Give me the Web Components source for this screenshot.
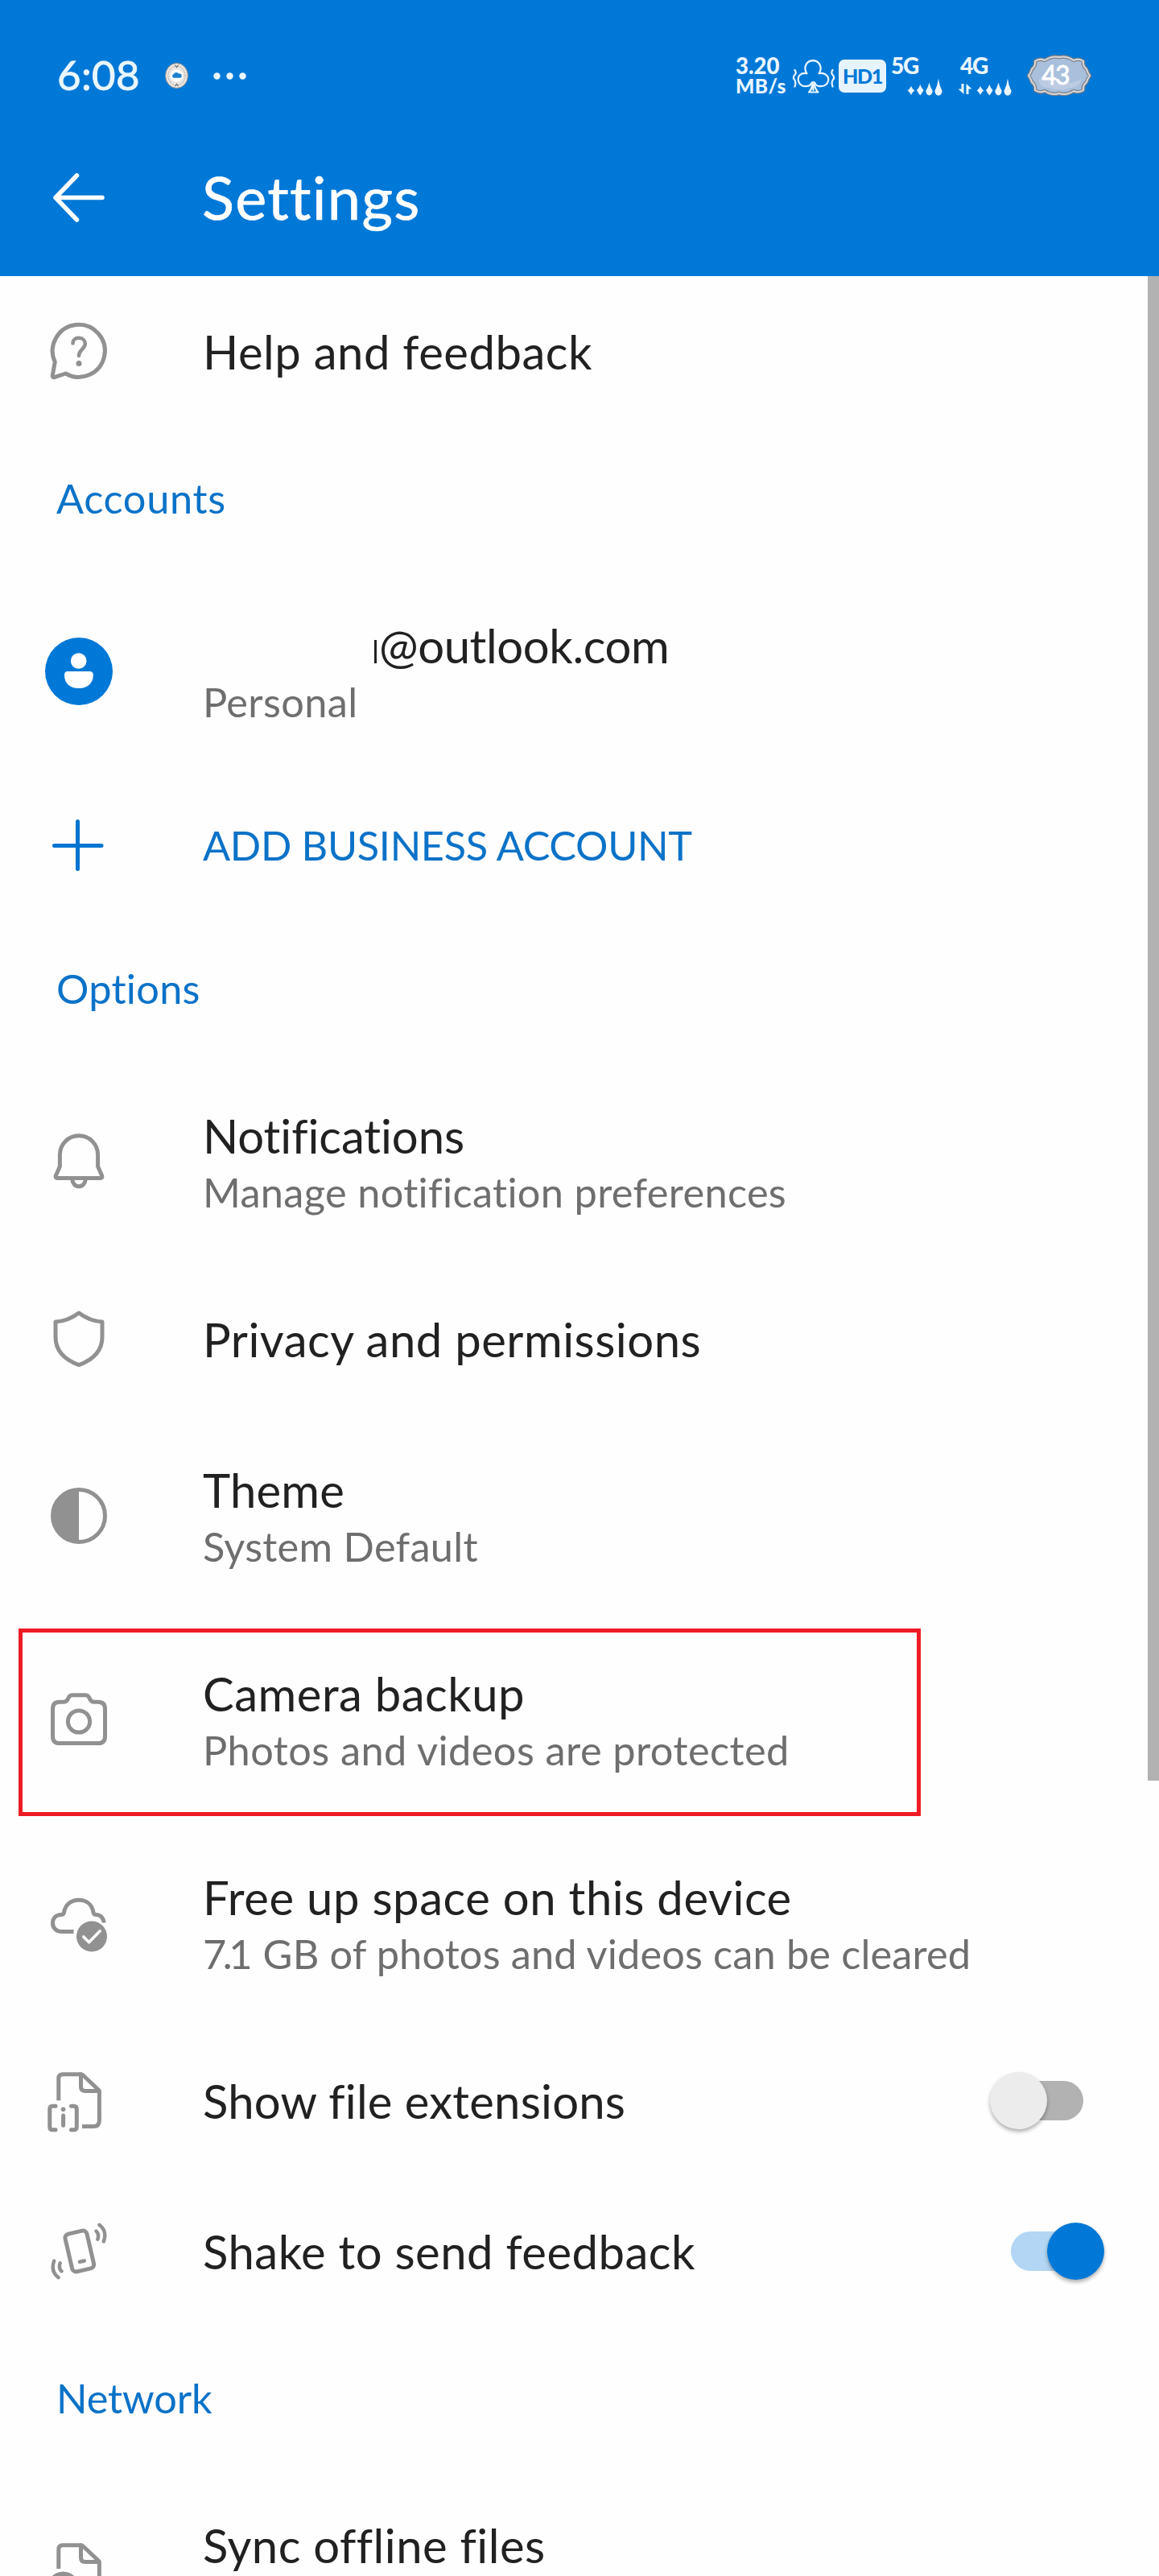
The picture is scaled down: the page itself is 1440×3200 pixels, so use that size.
<!DOCTYPE html>
<html lang="en">
<head>
<meta charset="utf-8">
<title>Settings</title>
<style>
  html, body { margin: 0; padding: 0; }
  body {
    width: 1440px;
    height: 3200px;
    overflow: hidden;
    background: #fefefe;
    color: #212121;
    font-family: Lato, "Open Sans", sans-serif;
    font-variant-ligatures: none;
  }
  .tight { letter-spacing: -0.09em; }
</style>
</head>
<body>
<settings-screen>
  <status-bar slot="header" time="6:08" battery="43"></status-bar>
  <app-bar slot="header">Settings</app-bar>

  <settings-row icon="help" spacing="0.009em">Help and feedback</settings-row>

  <section-label spacing="0.0135em">Accounts</section-label>
  <settings-row icon="person" spacing="-0.0066em" sub-spacing="0.007em">
    <masked-name>@outlook.com</masked-name>
    <span slot="sub">Personal</span>
  </settings-row>
  <settings-row icon="plus" kind="action" spacing="-0.0065em">ADD BUSINESS ACCOUNT</settings-row>

  <section-label spacing="0.0055em">Options</section-label>
  <settings-row icon="bell" spacing="-0.0012em" sub-spacing="0.0063em">
    Notifications
    <span slot="sub">Manage notification preferences</span>
  </settings-row>
  <settings-row icon="shield" spacing="0.0089em">Privacy and permissions</settings-row>
  <settings-row icon="theme" spacing="0.003em" sub-spacing="0.0055em">
    Theme
    <span slot="sub">System Default</span>
  </settings-row>
  <settings-row icon="camera" marked spacing="0.0086em" sub-spacing="0.0086em">
    Camera backup
    <span slot="sub">Photos and videos are protected</span>
  </settings-row>
  <settings-row icon="cloud" spacing="0.0095em" sub-spacing="0.0027em">
    Free up space on this device
    <span slot="sub"><span class="tight">7.</span>1 GB of photos and videos can be cleared</span>
  </settings-row>
  <settings-row icon="extensions" spacing="0.004em">
    Show file extensions
    <toggle-switch slot="control"></toggle-switch>
  </settings-row>
  <settings-row icon="shake" spacing="0.0088em">
    Shake to send feedback
    <toggle-switch slot="control" checked></toggle-switch>
  </settings-row>

  <section-label spacing="-0.0023em">Network</section-label>
  <settings-row icon="sync" spacing="0.0085em">
    Sync offline files
    <span slot="sub">&nbsp;</span>
  </settings-row>
</settings-screen>

<script>
// All row icons share an 84x84 box
const FILE_TOP = '<path d="M44.5 9.8 H22 Q16.8 9.8 16.8 15 V';
const FILE_FOLD = '<path d="M44.5 9.8 V25 Q44.5 30.5 50 30.5 H67.3"/>';
const ICONS = {
  help: `
    <path d="M25.5 70 A32.5 32.5 0 1 0 12.3 55.5 L9.2 72.6 Q9.2 75 11.6 74.7 Z"/>
    <path stroke-width="4.6" d="M34.5 32.5 C34.5 28.5 37.5 25.8 42 25.8 S49.8 28.8 49.8 33 C49.8 39.5 42 40.5 42 48"/>
    <circle cx="42" cy="57.6" r="3.5" fill="currentColor" stroke="none"/>`,
  person: `
    <circle cx="42" cy="42" r="42" fill="#0078d7" stroke="none"/>
    <circle cx="41.7" cy="29" r="9.8" fill="#fff" stroke="none"/>
    <path d="M28 42 H55.4 Q59.8 42 59.8 46.5 C59.8 57 52.5 63 41.7 63 S24 57 24 46.5 Q24 42 28 42 Z" fill="#fff" stroke="none"/>`,
  plus: `<path d="M40.5 13.5 V72.5 M11.5 43.5 H70"/>`,
  bell: `
    <path d="M42 9.8 A23.6 23.6 0 0 0 18.4 33.4 V48 L13.2 59.8 Q12.6 62.4 15 62.4 H69 Q71.4 62.4 70.8 59.8 L65.6 48 V33.4 A23.6 23.6 0 0 0 42 9.8 Z"/>
    <path d="M33.8 64 a8.2 8.8 0 0 0 16.4 0"/>`,
  shield: `<path d="M42 10 Q56 20.3 71 21 V40 C71 57 60 68 42 74.6 C24 68 13 57 13 40 V21 Q28 20.3 42 10 Z"/>`,
  theme: `
    <circle cx="42" cy="42" r="32.5"/>
    <path d="M42 8 A34 34 0 0 0 42 76 Z" fill="currentColor" stroke="none"/>`,
  camera: `
    <path d="M18 20.3 H23 Q26.3 20.3 27.8 17.5 L29.7 14 Q31 11.7 34 11.7 H50 Q53 11.7 54.3 14 L56.2 17.5 Q57.7 20.3 61 20.3 H66 Q74.5 20.3 74.5 28.8 V63 Q74.5 71.6 66 71.6 H18 Q9.5 71.6 9.5 63 V28.8 Q9.5 20.3 18 20.3 Z"/>
    <circle cx="42" cy="44.5" r="13.6"/>`,
  cloud: `
    <path stroke-linecap="butt" d="M35.5 52.6 H20.5 C14 52.6 9.5 48 9.5 42 C9.5 35.5 14 31.4 20 31.4 H20.5 Q23 31.4 23.5 28.8 C25 19 32 13.2 41.8 13.2 S58.5 19 60 28.8 Q60.5 31.4 63 31.4 C69 31.4 72.5 35.5 73.3 41.5"/>
    <circle cx="58" cy="58.5" r="21.5" fill="#fefefe" stroke="none"/>
    <circle cx="58" cy="58.5" r="19" fill="currentColor" stroke="none"/>
    <path stroke="#fefefe" stroke-width="3.6" d="M47.8 59 L54.6 65.8 L68.2 51.8"/>`,
  extensions: `
    ${FILE_TOP}42.3" stroke-linecap="butt"/>
    ${FILE_FOLD}
    <path stroke-linecap="butt" d="M44.5 9.8 Q46 9.8 47 10.8 L66.3 29 Q67.4 30.2 67.4 32 V67 Q67.4 74.6 60 74.6 H46"/>
    <path d="M13 49.2 H9.5 Q5.8 49.2 5.8 53 V75 Q5.8 78.8 9.5 78.8 H13 M32.5 49.2 H35.5 Q39.3 49.2 39.3 53 V75 Q39.3 78.8 35.5 78.8 H32.5 M22.6 61 V73.3"/>
    <circle cx="22.6" cy="53.2" r="2.8" fill="currentColor" stroke="none"/>`,
  shake: `
    <rect x="29" y="18.5" width="27.6" height="48" rx="5" transform="rotate(-13 42.8 42.5)"/>
    <path stroke-width="4.6" d="M43 55.8 L48.8 54.4"/>
    <path stroke-width="4.4" d="M63.5 17.5 Q67.6 21.5 65.3 27.8 M67.4 9.8 Q77.5 17.5 72.8 30.4 M20.5 67.5 Q16.4 63.5 18.7 57.2 M16.6 75.2 Q6.5 67.5 11.2 54.6"/>`,
  sync: `
    ${FILE_TOP}39" stroke-linecap="butt"/>
    ${FILE_FOLD}
    <path d="M44.5 9.8 Q46 9.8 47 10.8 L66.3 29 Q67.4 30.2 67.4 32 V80"/>
    <circle cx="22.5" cy="62.5" r="20" fill="currentColor" stroke="none"/>`
};

function shadow(el, html) {
  const template = document.createElement('template');
  template.innerHTML = html;
  const root = el.attachShadow({ mode: 'open' });
  root.appendChild(template.content.cloneNode(true));
  return root;
}

class SettingsScreen extends HTMLElement {
  constructor() {
    super();
    shadow(this, `
      <style>
        :host { display: block; position: relative; width: 1440px; height: 3200px; overflow: hidden; }
        header { height: 343px; background: #0078d7; color: #fff; }
        main { display: flex; flex-direction: column; margin-top: -1px; }
        .scroll { position: absolute; top: 343px; right: 0; width: 14px; height: 1869px; background: #b2b2b2; }
      </style>
      <header><slot name="header"></slot></header>
      <main><slot></slot></main>
      <div class="scroll"></div>
    `);
  }
}

class StatusBar extends HTMLElement {
  constructor() {
    super();
    shadow(this, `
      <style>
        :host {
          display: flex;
          box-sizing: border-box;
          align-items: center;
          height: 150px;
          padding: 38px 84px 0 71px;
          color: #eaf6ff;
          line-height: 1;
        }
        svg { display: block; overflow: visible; }
        .time { width: 133px; margin-top: -4px; font-size: 51px; letter-spacing: 0.007em; -webkit-text-stroke: 0.8px; }
        .grow { flex: 1; }
        .speed { width: 70px; font-size: 27.5px; font-weight: 900; line-height: 25px; }
        .speed div + div { font-size: 24.5px; letter-spacing: 0.02em; }
        .hd {
          width: 59px;
          height: 41px;
          margin-left: 4px;
          border-radius: 7px;
          background: #e6f4ff;
          color: #0078d7;
          font-size: 25px;
          font-weight: 900;
          line-height: 40px;
          text-align: center;
          letter-spacing: -0.05em;
        }
        .battery { display: grid; width: 80px; height: 50px; place-items: center; color: #fff; font-size: 32px; }
        .battery > * { grid-area: 1 / 1; }
        .battery span { letter-spacing: -0.06em; margin-left: -10px; margin-top: -2px; -webkit-text-stroke: 0.8px; }
      </style>
      <div class="time"></div>
      <svg width="31" height="34" viewBox="0 0 31 34">
        <ellipse cx="15.5" cy="17" rx="14" ry="15.5" fill="#e8e4e0" stroke="#8d8d8d" stroke-width="1"/>
        <ellipse cx="15.5" cy="17" rx="10.5" ry="12" fill="none" stroke="#9c9792" stroke-width="1" stroke-dasharray="1.5 1.5"/>
        <path d="M13.5 4 L15.5 6.5 L17.5 4 M13.5 30 L15.5 27.5 L17.5 30" stroke="#666" stroke-width="1.2" fill="none"/>
        <circle cx="15.5" cy="17" r="7.8" fill="#fff"/>
        <path d="M11.5 19.8 a2.6 2.6 0 0 1 .4-4.8 a3.6 3.6 0 0 1 6.2-.6 a3 3 0 0 1 2.4 5.4 Z" fill="#1c7fd0"/>
      </svg>
      <svg width="41" height="9" viewBox="0 0 41 9" fill="currentColor" style="margin-left:30px">
        <circle cx="4.5" cy="4.5" r="4.2"/><circle cx="20.5" cy="4.5" r="4.2"/><circle cx="36.5" cy="4.5" r="4.2"/>
      </svg>
      <div class="grow"></div>
      <div class="speed"><div>3.20</div><div>MB/s</div></div>
      <svg width="54" height="43" viewBox="0 0 54 43" fill="none" stroke="currentColor" stroke-width="2.2" stroke-linejoin="round" stroke-linecap="round">
        <path d="M24.5 30 C22 35.5 10.5 36.5 8 27.5 C6.5 21 12 16.5 18.5 18.3 C14 12 17 2.5 26 2.2 C35 2.5 38 12 33.5 18.3 C40 16.5 46.5 21 45 27.5 C42.5 36.5 30 35.5 28.5 30"/>
        <path d="M25.5 29 C25.5 35 24.5 38 21 41.5 H32.5 C29 38 28 35 27.5 29 M26.5 33 V39"/>
        <path d="M3.5 14 Q6 17.5 3.5 20 Q.5 23 3 26 Q5.5 29 3.5 34.5 M50.5 14 Q48 17.5 50.5 20 Q53.5 23 51 26 Q48.5 29 50.5 34.5"/>
      </svg>
      <div class="hd">HD1</div>
      <signal-bars label="5G" style="margin-left:6px"></signal-bars>
      <signal-bars label="4G" data></signal-bars>
      <div class="battery">
        <svg width="80" height="50" viewBox="0 0 80 50">
          <path d="M10 7 Q16 3 22 6 Q31 0 40 2 Q49 0 58 6 Q64 3 70 7 Q69 13 74 17 Q75 21 78 25 Q75 29 74 33 Q69 37 70 43 Q64 47 58 44 Q49 50 40 47 Q31 50 22 44 Q16 47 10 43 Q11 37 6 33 Q5 29 2 25 Q5 21 6 17 Q11 13 10 7 Z"
            fill="#a9c0dd" stroke="#7d7f86" stroke-width="4.5" stroke-linejoin="round"/>
          <path d="M10 7 Q16 3 22 6 Q31 0 40 2 Q49 0 58 6 Q64 3 70 7 Q69 13 74 17 Q75 21 78 25 Q75 29 74 33 Q69 37 70 43 Q64 47 58 44 Q49 50 40 47 Q31 50 22 44 Q16 47 10 43 Q11 37 6 33 Q5 29 2 25 Q5 21 6 17 Q11 13 10 7 Z"
            fill="none" stroke="#d8dade" stroke-width="2" stroke-linejoin="round"/>
          <path d="M14 30 Q28 24 40 31 T68 29 Q64 41 54 40 Q40 45 27 40 Q16 40 14 30 Z" fill="#bccbe2"/>
        </svg>
        <span></span>
      </div>
    `);
  }

  connectedCallback() {
    this.shadowRoot.querySelector('.time').textContent = this.getAttribute('time');
    this.shadowRoot.querySelector('.battery span').textContent = this.getAttribute('battery');
  }
}

class SignalBars extends HTMLElement {
  constructor() {
    super();
    shadow(this, `
      <style>
        :host { display: block; width: 86px; height: 50px; }
        div { margin-top: -1px; font-size: 28px; font-weight: 900; line-height: 27px; letter-spacing: -0.04em; }
        svg { display: block; margin-top: 4px; }
        :host([data]) { width: 83px; }
      </style>
      <div></div>
      <svg width="68" height="22" viewBox="0 0 68 22" fill="currentColor" overflow="visible">
        <path d="M25 8 Q26.5 11.5 29.3 13.5 Q26.5 15.5 25 19 Q23.5 15.5 20.7 13.5 Q23.5 11.5 25 8 Z"/>
        <path d="M36.3 6 Q37.5 10 40.6 13 Q38.5 17 36.3 19.4 Q34 17 32 13 Q35 10 36.3 6 Z"/>
        <path d="M47.5 3.5 Q48.7 9 51.8 14 Q51 19 47.5 19.5 Q44 19 43.2 14 Q46.3 9 47.5 3.5 Z"/>
        <path d="M59 -1.5 Q60 7 63.6 14 Q63 19.5 59 19.7 Q55 19.5 54.4 14 Q58 7 59 -1.5 Z"/>
      </svg>
    `);
  }

  connectedCallback() {
    const root = this.shadowRoot;
    root.querySelector('div').textContent = this.getAttribute('label');
    if (this.hasAttribute('data')) {
      root.querySelector('svg').innerHTML +=
        '<path d="M4.5 5 V18 L-2.5 11.5 H1.5 V5 Z M7.5 18 V5 L14.5 11.5 H10.5 V18 Z"/>';
    }
  }
}

class AppBar extends HTMLElement {
  constructor() {
    super();
    shadow(this, `
      <style>
        :host { display: flex; align-items: center; height: 193px; font-size: 74px; letter-spacing: 0.017em; }
        svg { display: block; width: 84px; margin: 0 111px 0 56px; }
        .title { line-height: 86px; margin-top: -3px; -webkit-text-stroke: 0.6px; }
      </style>
      <svg width="84" height="84" viewBox="0 0 84 84" fill="none" stroke="currentColor" stroke-width="5.5" stroke-linecap="round" stroke-linejoin="round">
        <path d="M13.5 40.5 H71 M39.5 13 L13 40.5 L39.5 68"/>
      </svg>
      <div class="title"><slot></slot></div>
    `);
  }
}

class SectionLabel extends HTMLElement {
  constructor() {
    super();
    shadow(this, `
      <style>
        :host { display: block; flex: none; height: 178px; padding-left: 70px; color: #0b72c8; font-size: 50.5px; line-height: 180px; }
      </style>
      <slot></slot>
    `);
  }

  connectedCallback() {
    this.style.letterSpacing = this.getAttribute('spacing');
  }
}

class SettingsRow extends HTMLElement {
  constructor() {
    super();
    shadow(this, `
      <style>
        :host { position: relative; display: flex; flex: none; height: 187px; align-items: center; }
        :host(.double) { height: 253px; }
        :host([kind="action"]) { height: 178px; }
        .icon { flex: none; width: 84px; height: 84px; margin: 0 112px 0 56px; color: #919191; }
        :host([kind="action"]) .icon { color: #0074d0; }
        svg { display: block; overflow: visible; }
        .text { flex: 1; align-self: flex-start; white-space: nowrap; }
        .title { padding-top: 60px; height: 70px; font-size: 58px; line-height: 70px; }
        .sub { font-size: 50.5px; line-height: 70px; color: #6e6e6e; }
        :host([kind="action"]) .title { padding-top: 55px; color: #0b72c8; font-size: 50.5px; }
        .mark { display: none; }
        :host([marked]) .mark {
          display: block;
          position: absolute;
          box-sizing: border-box;
          top: 14px;
          left: 23px;
          width: 1121px;
          height: 233px;
          border: 5px solid #ee1c24;
        }
      </style>
      <div class="icon"></div>
      <div class="text">
        <div class="title"><slot></slot></div>
        <div class="sub"><slot name="sub"></slot></div>
      </div>
      <slot name="control"></slot>
      <div class="mark"></div>
    `);
  }

  connectedCallback() {
    const root = this.shadowRoot;
    root.querySelector('.icon').innerHTML =
      '<svg width="84" height="84" viewBox="0 0 84 84" fill="none" stroke="currentColor" stroke-width="5" stroke-linecap="round" stroke-linejoin="round">'
      + ICONS[this.getAttribute('icon')] + '</svg>';
    root.querySelector('.title').style.letterSpacing = this.getAttribute('spacing');
    root.querySelector('.sub').style.letterSpacing = this.getAttribute('sub-spacing');
    this.classList.toggle('double', !!this.querySelector('[slot="sub"]'));
  }
}

// Account name with everything before the last stem blanked out
class MaskedName extends HTMLElement {
  constructor() {
    super();
    shadow(this, `
      <style>
        :host { display: inline-flex; align-items: baseline; padding-left: 213px; }
        i { width: 3px; height: 29px; margin-right: 3px; background: #212121; }
      </style>
      <i></i><slot></slot>
    `);
  }
}

class ToggleSwitch extends HTMLElement {
  constructor() {
    super();
    shadow(this, `
      <style>
        :host { display: grid; width: 116px; height: 71px; margin: 2px 94px 0 0; align-items: center; }
        :host([checked]) { margin-right: 68px; }
        div { grid-area: 1 / 1; }
        .track { width: 92px; height: 49px; border-radius: 25px; justify-self: end; background: #b2b2b2; }
        .thumb { width: 71px; height: 71px; border-radius: 50%; background: #ececec; box-shadow: 0 3px 5px rgba(0, 0, 0, .32); }
        :host([checked]) .track { justify-self: start; background: #b2d6f3; }
        :host([checked]) .thumb { justify-self: end; background: #0078d7; }
      </style>
      <div class="track"></div>
      <div class="thumb"></div>
    `);
  }
}

customElements.define('toggle-switch', ToggleSwitch);
customElements.define('masked-name', MaskedName);
customElements.define('signal-bars', SignalBars);
customElements.define('status-bar', StatusBar);
customElements.define('app-bar', AppBar);
customElements.define('section-label', SectionLabel);
customElements.define('settings-row', SettingsRow);
customElements.define('settings-screen', SettingsScreen);
</script>
</body>
</html>
